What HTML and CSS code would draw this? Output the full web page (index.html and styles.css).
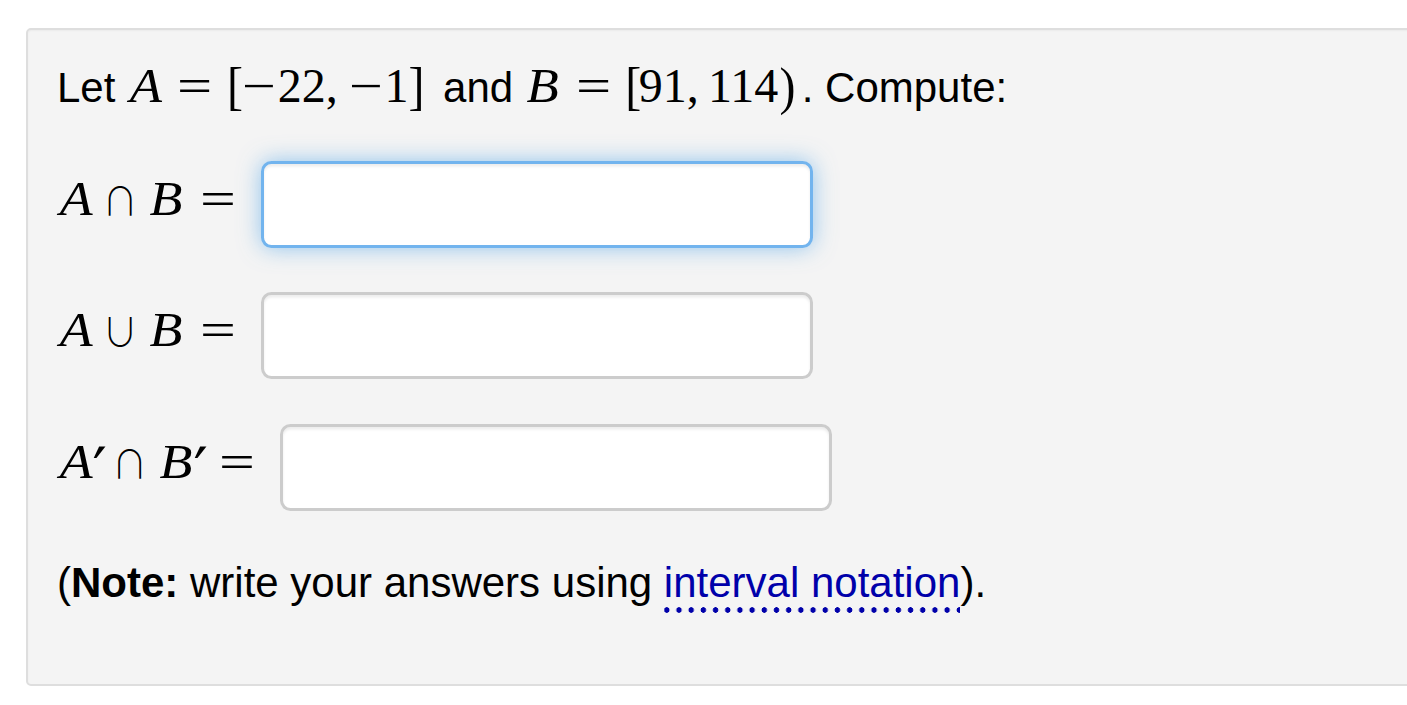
FILE: index.html
```html
<!DOCTYPE html>
<html lang="en">
<head>
<meta charset="utf-8">
<title>Set operations on intervals</title>
<link rel="stylesheet" href="styles.css">
</head>
<body>
<div class="card">
  <p class="intro">Let <span class="m m-inline"><span class="mi">A</span><span class="rel">=</span><span class="open">[</span><span class="un">−</span>22<span class="punct">,</span><span class="un">−</span>1<span class="close">]</span></span> and <span class="m m-inline m-last"><span class="mi mi-b">B</span><span class="rel">=</span><span class="open">[</span>91<span class="punct">,</span>114<span class="close cparen">)</span></span>. Compute:</p>
  <div class="rows">
    <div class="row">
      <span class="m label"><span class="mi">A</span><span class="bin">∩</span><span class="mi mi-b">B</span><span class="rel">=</span></span>
      <input class="answer is-focused" type="text" aria-label="A intersect B">
    </div>
    <div class="row">
      <span class="m label"><span class="mi">A</span><span class="bin">∪</span><span class="mi mi-b">B</span><span class="rel">=</span></span>
      <input class="answer" type="text" aria-label="A union B">
    </div>
    <div class="row">
      <span class="m label"><span class="mi">A</span><span class="prime">′</span><span class="bin">∩</span><span class="mi mi-b">B</span><span class="prime">′</span><span class="rel">=</span></span>
      <input class="answer" type="text" aria-label="A complement intersect B complement">
    </div>
  </div>
  <p class="note">(<b>Note:</b> write your answers using <a class="link" href="#">interval notation</a>).</p>
</div>
</body>
</html>
```

FILE: styles.css
```css
html, body {
  margin: 0;
  padding: 0;
  overflow: hidden;
  background: #ffffff;
}

.card {
  margin: 28px -30px 0 26px;
  border: 2px solid #dedede;
  border-radius: 5px;
  background: #f4f4f4;
  box-shadow: inset 0 1px 2px rgba(0, 0, 0, 0.04);
  padding: 28.4px 0 70.6px 29px;
  font-family: "Liberation Sans", Arial, sans-serif;
  font-size: 42px;
  color: #000;
}

.intro,
.note {
  margin: 0;
  line-height: 60px;
  white-space: nowrap;
}

/* math */
.m {
  font-family: "Liberation Serif", "DejaVu Serif", serif;
  font-size: 49px;
  line-height: 1;
  white-space: nowrap;
}

.m-inline {
  font-size: 48px;
  margin-right: 0.2em;
}

.m-last {
  margin-right: 0.1em;
}

.mi {
  display: inline-block;
  width: 0.75em;
  padding-left: 0.05em;
  box-sizing: border-box;
  font-style: italic;
  transform: scaleX(1.1);
  transform-origin: left center;
}

.mi-b {
  width: 0.76em;
  padding-left: 0.03em;
}

.rel {
  display: inline-block;
  width: 0.778em;
  margin: 0 0.278em;
  text-align: center;
  transform: scaleX(1.3);
}

.un {
  display: inline-block;
  width: 0.778em;
  text-align: center;
  transform: scaleX(1.25);
}

.bin {
  display: inline-block;
  font-family: "Noto Sans CJK JP", "DejaVu Sans", sans-serif;
  font-weight: 300;
  font-size: 0.72em;
  width: 0.926em;
  margin: 0 0.308em;
  text-align: center;
  text-indent: -0.06em;
  transform: scaleY(1.1);
  transform-origin: center bottom;
}

.open,
.close {
  display: inline-block;
  width: 0.278em;
  text-align: center;
  transform: scaleY(1.12);
}

.cparen {
  width: 0.389em;
}

.punct {
  display: inline-block;
  width: 0.278em;
  margin-right: 0.167em;
}

.prime {
  display: inline-block;
  font-family: "DejaVu Sans", sans-serif;
  font-size: 1.3em;
  line-height: 0;
  width: 0.148em;
  text-indent: -0.02em;
  vertical-align: -0.24em;
}

/* answer rows */
.rows {
  display: flex;
  flex-direction: column;
  gap: 44.5px;
  margin-top: 42.6px;
}

.row {
  display: flex;
  align-items: center;
  height: 87px;
}

.label {
  margin-bottom: 12.1px;
}

.answer {
  box-sizing: border-box;
  width: 552px;
  height: 87px;
  margin: 0 0 0 10.2px;
  padding: 0 16px;
  border: 3px solid #cccccc;
  border-radius: 10.4px;
  background: #ffffff;
  box-shadow: inset 0 2.6px 2.6px rgba(0, 0, 0, 0.075);
  font-family: "Liberation Sans", Arial, sans-serif;
  font-size: 36px;
  outline: none;
}

.answer.is-focused {
  border-color: #72b4ee;
  box-shadow: inset 0 2.6px 2.6px rgba(0, 0, 0, 0.075), 0 0 22px rgba(102, 175, 233, 0.7);
}

.note {
  margin-top: 42px;
}

.link {
  color: #0000aa;
  text-decoration: none;
  padding-bottom: 7px;
  background-image: radial-gradient(circle at center, #0000aa 2.5px, transparent 3px);
  background-size: 12.2px 6px;
  background-repeat: repeat-x;
  background-position: -3.3px 100%;
}
```
